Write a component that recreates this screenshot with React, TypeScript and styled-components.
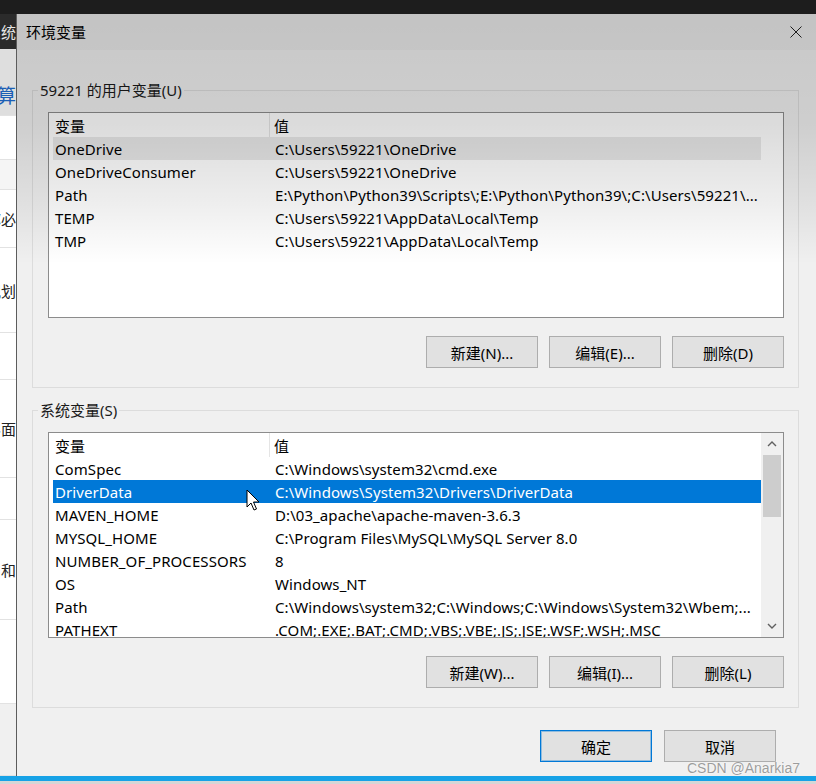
import React from "react";
import styled, { createGlobalStyle } from "styled-components";

const GlobalStyle = createGlobalStyle`
  html, body {
    margin: 0;
    padding: 0;
  }
  body {
    font-family: "Noto Sans", "Noto Sans CJK SC", sans-serif;
    font-size: 15px;
    color: #000;
  }
  * {
    box-sizing: border-box;
  }
`;

const Screen = styled.div`
  position: relative;
  width: 816px;
  height: 784px;
  overflow: hidden;
  display: flex;
  flex-direction: column;
  background: #f0f0f0;
`;

const TopBar = styled.div`
  height: 14px;
  flex-shrink: 0;
  background: #1d1d1d;
`;

const Main = styled.div`
  flex: 1;
  display: flex;
  min-height: 0;
`;

const AccentLine = styled.div`
  height: 5px;
  flex-shrink: 0;
  background: #17a2e6;
`;

const BottomStrip = styled.div`
  height: 3px;
  flex-shrink: 0;
  background: #d6d6d6;
`;

/* the window behind the dialog, only a sliver is visible */
const BehindStrip = styled.div`
  width: 16px;
  flex-shrink: 0;
  display: flex;
  flex-direction: column;
  background: #fff;
`;

const StripCell = styled.div<{ $h: number; $bg?: string; $color?: string; $size?: number; $end?: boolean }>`
  height: ${(p) => p.$h}px;
  flex-shrink: 0;
  display: flex;
  align-items: ${(p) => (p.$end ? "flex-end" : "center")};
  justify-content: flex-end;
  padding-bottom: ${(p) => (p.$end ? "6px" : "0")};
  overflow: hidden;
  white-space: nowrap;
  background: ${(p) => p.$bg || "#fff"};
  color: ${(p) => p.$color || "#222"};
  font-size: ${(p) => p.$size || 15}px;
  border-bottom: 1px solid #e2e2e2;
`;

const Dialog = styled.div`
  position: relative;
  flex: 1;
  display: flex;
  flex-direction: column;
  background: #f0f0f0;
  border-left: 1px solid #5c5c5c;
`;

const Fade = styled.div`
  position: absolute;
  left: 0;
  right: 0;
  top: 0;
  height: 260px;
  pointer-events: none;
  background: linear-gradient(
    to bottom,
    rgba(0, 0, 0, 0.17) 0px,
    rgba(0, 0, 0, 0.14) 110px,
    rgba(0, 0, 0, 0.065) 190px,
    rgba(0, 0, 0, 0) 250px
  );
`;

const TitleBar = styled.div`
  height: 36px;
  flex-shrink: 0;
  display: flex;
  align-items: center;
  justify-content: space-between;
  padding: 0 14px 1px 9px;
  background: #ebebeb;
  font-size: 15px;
  color: #000;
`;

const CloseButton = styled.div`
  width: 12px;
  height: 12px;
  display: flex;
`;

const Body = styled.div`
  flex: 1;
  padding: 30px 17px 0 15px;
  display: flex;
  flex-direction: column;
`;

const Group = styled.fieldset<{ $gap?: number }>`
  margin: ${(p) => p.$gap || 0}px 0 0 0;
  padding: 12px 14px 19px 15px;
  border: 1px solid #dcdcdc;
  min-width: 0;
`;

const Legend = styled.legend`
  margin-left: -10px;
  padding: 0 2px;
  line-height: 20px;
  font-size: 15px;
  color: #1a1a1a;
`;

const ListView = styled.div`
  height: 206px;
  display: flex;
  background: #fff;
  border: 1px solid #8c8c8c;
  overflow: hidden;
  letter-spacing: 0.08px;
`;

const ListContent = styled.div`
  width: 712px;
  flex-shrink: 0;
  display: flex;
  flex-direction: column;
`;

const HeaderRow = styled.div`
  height: 24px;
  flex-shrink: 0;
  display: flex;
  align-items: center;
`;

const HeaderCell = styled.div<{ $w?: number }>`
  width: ${(p) => (p.$w ? `${p.$w}px` : "auto")};
  flex: ${(p) => (p.$w ? "none" : "1")};
  height: 100%;
  display: flex;
  align-items: center;
  padding-left: ${(p) => (p.$w ? 6 : 4)}px;
  border-right: ${(p) => (p.$w ? "1px solid #e5e5e5" : "none")};
`;

const Row = styled.div<{ $sel?: "active" | "idle" }>`
  height: 23px;
  flex-shrink: 0;
  margin-left: 4px;
  display: flex;
  align-items: center;
  white-space: nowrap;
  background: ${(p) => (p.$sel === "active" ? "#0078d7" : p.$sel === "idle" ? "#e9e9e9" : "transparent")};
  color: ${(p) => (p.$sel === "active" ? "#fff" : "#000")};
`;

const NameCell = styled.div`
  width: 218px;
  flex-shrink: 0;
  padding-left: 2px;
  overflow: hidden;
`;

const ValueCell = styled.div`
  flex: 1;
  padding-left: 4px;
  overflow: hidden;
`;

const ScrollTrack = styled.div`
  flex: 1;
  display: flex;
  flex-direction: column;
  background: #f0f0f0;
`;

const ScrollArrow = styled.div`
  height: 22px;
  flex-shrink: 0;
  display: flex;
  align-items: center;
  justify-content: center;
`;

const ScrollThumb = styled.div`
  height: 62px;
  margin: 0 2px;
  background: #cdcdcd;
`;

const ScrollSpace = styled.div`
  flex: 1;
`;

const ButtonRow = styled.div<{ $gap: number; $top: number; $right?: number }>`
  display: flex;
  justify-content: flex-end;
  gap: ${(p) => p.$gap}px;
  margin-top: ${(p) => p.$top}px;
  padding-right: ${(p) => p.$right || 0}px;
`;

const Button = styled.button<{ $primary?: boolean }>`
  width: 112px;
  height: 32px;
  padding: 0;
  font-family: inherit;
  font-size: 15px;
  color: #000;
  background: #e1e1e1;
  border: 1px solid ${(p) => (p.$primary ? "#0078d7" : "#adadad")};
  box-shadow: ${(p) => (p.$primary ? "inset 0 0 0 1px rgba(0, 120, 215, 0.35)" : "none")};
`;

const Watermark = styled.div`
  position: absolute;
  right: 16px;
  bottom: 8px;
  font-family: "Liberation Sans", sans-serif;
  font-size: 14px;
  color: rgba(140, 140, 140, 0.85);
  text-shadow: 0 0 2px #fff;
  pointer-events: none;
`;

const Pointer = styled.svg`
  position: absolute;
  left: 246px;
  top: 489px;
  pointer-events: none;
`;

const userVars: [string, string][] = [
  ["OneDrive", "C:\\Users\\59221\\OneDrive"],
  ["OneDriveConsumer", "C:\\Users\\59221\\OneDrive"],
  ["Path", "E:\\Python\\Python39\\Scripts\\;E:\\Python\\Python39\\;C:\\Users\\59221\\..."],
  ["TEMP", "C:\\Users\\59221\\AppData\\Local\\Temp"],
  ["TMP", "C:\\Users\\59221\\AppData\\Local\\Temp"],
];

const systemVars: [string, string][] = [
  ["ComSpec", "C:\\Windows\\system32\\cmd.exe"],
  ["DriverData", "C:\\Windows\\System32\\Drivers\\DriverData"],
  ["MAVEN_HOME", "D:\\03_apache\\apache-maven-3.6.3"],
  ["MYSQL_HOME", "C:\\Program Files\\MySQL\\MySQL Server 8.0"],
  ["NUMBER_OF_PROCESSORS", "8"],
  ["OS", "Windows_NT"],
  ["Path", "C:\\Windows\\system32;C:\\Windows;C:\\Windows\\System32\\Wbem;..."],
  ["PATHEXT", ".COM;.EXE;.BAT;.CMD;.VBS;.VBE;.JS;.JSE;.WSF;.WSH;.MSC"],
];

function Chevron({ down }: { down?: boolean }) {
  return (
    <svg width="10" height="6" viewBox="0 0 10 6">
      <polyline
        points={down ? "1,1 5,5 9,1" : "1,5 5,1 9,5"}
        fill="none"
        stroke="#606060"
        strokeWidth="1.4"
      />
    </svg>
  );
}

function VarList({ rows, selected, focused, scroll }: {
  rows: [string, string][];
  selected: number;
  focused?: boolean;
  scroll?: boolean;
}) {
  return (
    <ListView>
      <ListContent>
        <HeaderRow>
          <HeaderCell $w={221}>变量</HeaderCell>
          <HeaderCell>值</HeaderCell>
        </HeaderRow>
        {rows.map(([name, value], i) => (
          <Row key={name + i} $sel={i === selected ? (focused ? "active" : "idle") : undefined}>
            <NameCell>{name}</NameCell>
            <ValueCell>{value}</ValueCell>
          </Row>
        ))}
      </ListContent>
      {scroll && (
        <ScrollTrack>
          <ScrollArrow>
            <Chevron />
          </ScrollArrow>
          <ScrollThumb />
          <ScrollSpace />
          <ScrollArrow>
            <Chevron down />
          </ScrollArrow>
        </ScrollTrack>
      )}
    </ListView>
  );
}

export default function App() {
  return (
    <>
      <GlobalStyle />
      <Screen>
        <TopBar />
        <Main>
          <BehindStrip>
            <StripCell $h={36} $bg="#2b2b2b" $color="#e6e6e6">系统</StripCell>
            <StripCell $h={66} $bg="#dedede" $color="#1c5fb5" $size={19} $end>计算</StripCell>
            <StripCell $h={44} />
            <StripCell $h={30} $bg="#f5f5f5" />
            <StripCell $h={58}>称必</StripCell>
            <StripCell $h={85}>规划</StripCell>
            <StripCell $h={47} />
            <StripCell $h={98}>界面</StripCell>
            <StripCell $h={42} />
            <StripCell $h={100}>和</StripCell>
            <StripCell $h={84} />
            <StripCell $h={72} $bg="#f0f0f0" />
          </BehindStrip>
          <Dialog>
            <TitleBar>
              <span>环境变量</span>
              <CloseButton>
                <svg width="12" height="12" viewBox="0 0 12 12">
                  <path d="M0.5 0.5 L11.5 11.5 M11.5 0.5 L0.5 11.5" stroke="#222" strokeWidth="1" />
                </svg>
              </CloseButton>
            </TitleBar>
            <Body>
              <Group>
                <Legend>59221 的用户变量(U)</Legend>
                <VarList rows={userVars} selected={0} />
                <ButtonRow $gap={11} $top={18}>
                  <Button>新建(N)...</Button>
                  <Button>编辑(E)...</Button>
                  <Button>删除(D)</Button>
                </ButtonRow>
              </Group>
              <Group $gap={12}>
                <Legend>系统变量(S)</Legend>
                <VarList rows={systemVars} selected={1} focused scroll />
                <ButtonRow $gap={11} $top={18}>
                  <Button>新建(W)...</Button>
                  <Button>编辑(I)...</Button>
                  <Button>删除(L)</Button>
                </ButtonRow>
              </Group>
              <ButtonRow $gap={12} $top={22} $right={23}>
                <Button $primary>确定</Button>
                <Button>取消</Button>
              </ButtonRow>
            </Body>
            <Fade />
          </Dialog>
        </Main>
        <AccentLine />
        <BottomStrip />
        <Watermark>CSDN @Anarkia7</Watermark>
        <Pointer width="14" height="23" viewBox="0 0 14 23">
          <path
            d="M1 1 L1 18 L5 14 L8 21 L10.5 20 L7.5 13 L13 13 Z"
            fill="#fff"
            stroke="#000"
            strokeWidth="1"
            strokeLinejoin="round"
          />
        </Pointer>
      </Screen>
    </>
  );
}
